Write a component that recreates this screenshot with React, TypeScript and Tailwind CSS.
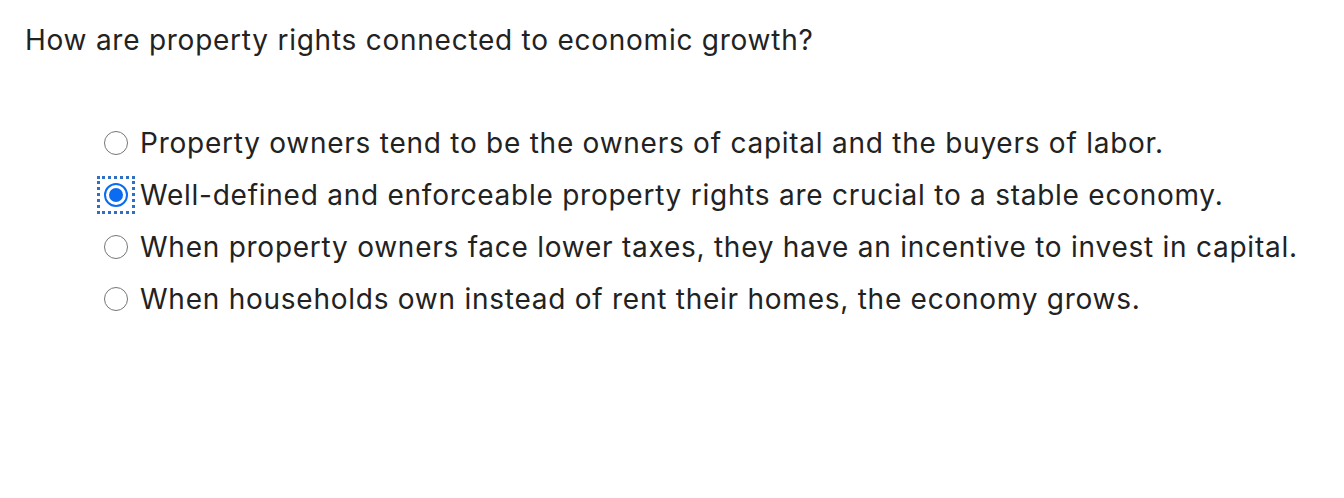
import React, { useState } from "react";

const options = [
  "Property owners tend to be the owners of capital and the buyers of labor.",
  "Well-defined and enforceable property rights are crucial to a stable economy.",
  "When property owners face lower taxes, they have an incentive to invest in capital.",
  "When households own instead of rent their homes, the economy grows.",
];

function Radio({ checked, focused }: { checked: boolean; focused: boolean }) {
  return (
    <span
      className={
        "flex h-[38px] w-[38px] shrink-0 items-center justify-center " +
        (focused ? "outline-[3px] outline-dotted outline-[#2f6fc4] -outline-offset-[3px]" : "")
      }
    >
      <span
        className={
          "flex h-[24px] w-[24px] items-center justify-center rounded-full bg-white " +
          (checked ? "border-2 border-[#0b6cf2]" : "border-[1.5px] border-[#767676]")
        }
      >
        {checked && <span className="h-[14px] w-[14px] rounded-full bg-[#0b6cf2]" />}
      </span>
    </span>
  );
}

export default function App() {
  const [value, setValue] = useState(1);
  return (
    <div
      className="h-[498px] w-[1344px] bg-white text-[#222222] tracking-[0.75px]"
      style={{ fontFamily: "Inter, 'Noto Sans', sans-serif" }}
    >
      <div className="px-[25px] pt-[22px]">
        <h1 className="text-[28px] leading-[36px] font-normal">
          How are property rights connected to economic growth?
        </h1>
      </div>
      <ul className="mt-[59px] ml-[97px] flex flex-col">
        {options.map((o, i) => (
          <li key={i}>
            <label
              className="flex h-[52px] cursor-pointer items-center gap-[5px] text-[28px]"
              onClick={() => setValue(i)}
            >
              <Radio checked={value === i} focused={value === i} />
              <span>{o}</span>
            </label>
          </li>
        ))}
      </ul>
    </div>
  );
}
